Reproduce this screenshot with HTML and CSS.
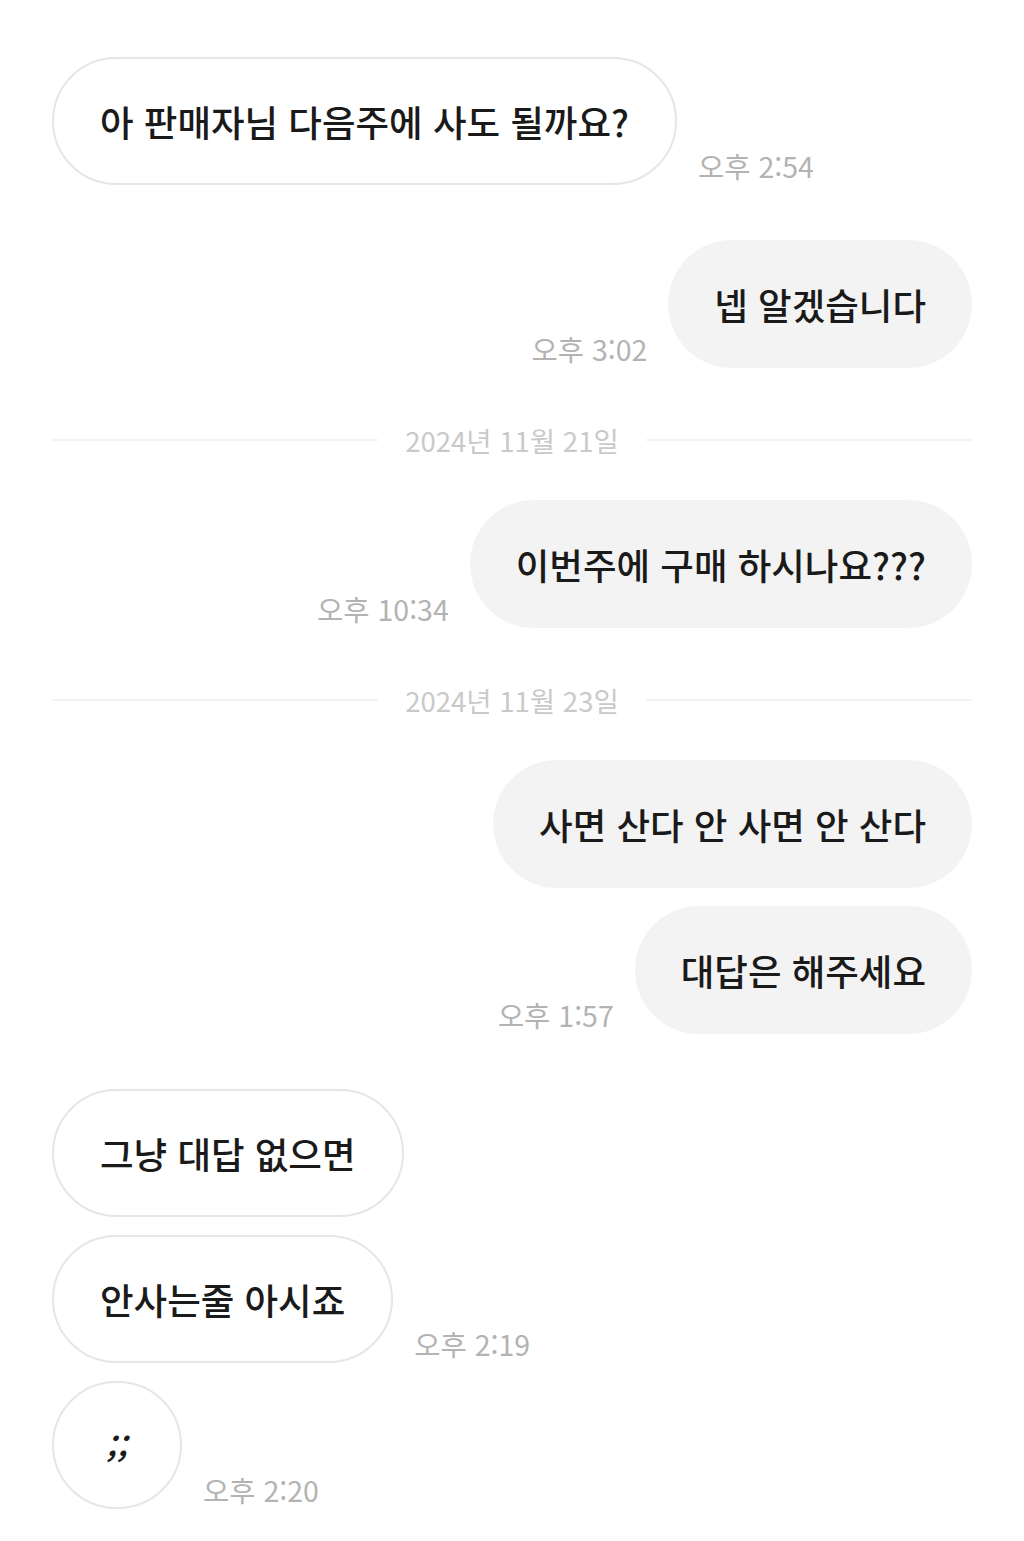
FILE: index.html
```html
<!DOCTYPE html>
<html lang="ko">
<head>
    <meta charset="UTF-8">
    <meta name="viewport" content="width=device-width, initial-scale=1.0">
    <title>채팅</title>
    <link rel="stylesheet" href="styles.css">
</head>
<body>
    <div class="chat">
        <div class="row left">
            <div class="bubble">아 판매자님 다음주에 사도 될까요?</div>
            <span class="time">오후 2:54</span>
        </div>

        <div class="row right group">
            <span class="time">오후 3:02</span>
            <div class="bubble">넵 알겠습니다</div>
        </div>

        <div class="date">2024년 11월 21일</div>

        <div class="row right">
            <span class="time">오후 10:34</span>
            <div class="bubble">이번주에 구매 하시나요???</div>
        </div>

        <div class="date">2024년 11월 23일</div>

        <div class="row right">
            <div class="bubble">사면 산다 안 사면 안 산다</div>
        </div>
        <div class="row right next">
            <span class="time">오후 1:57</span>
            <div class="bubble">대답은 해주세요</div>
        </div>

        <div class="row left group">
            <div class="bubble">그냥 대답 없으면</div>
        </div>
        <div class="row left next">
            <div class="bubble">안사는줄 아시죠</div>
            <span class="time">오후 2:19</span>
        </div>
        <div class="row left next">
            <div class="bubble round">;;</div>
            <span class="time">오후 2:20</span>
        </div>
    </div>
</body>
</html>
```

FILE: styles.css
```css
body {
    margin: 0;
    background: #fff;
    font-family: "Noto Sans CJK KR", "Noto Sans", sans-serif;
    color: #1a1a1a;
}
.chat {
    display: flex;
    flex-direction: column;
    padding: 57px 52px 40px;
}
.row {
    display: flex;
    align-items: flex-end;
    gap: 21px;
}
.row.right {
    justify-content: flex-end;
}
.row.group {
    margin-top: 55px;
}
.row.next {
    margin-top: 18px;
}
.bubble {
    box-sizing: border-box;
    height: 128px;
    display: flex;
    align-items: center;
    justify-content: center;
    padding: 0 46px;
    border-radius: 64px;
    font-size: 36.5px;
    font-weight: 500;
    white-space: nowrap;
}
.left .bubble {
    background: #fff;
    border: 2px solid #e6e6e6;
}
.right .bubble {
    background: #f3f3f3;
}
.bubble.round {
    width: 130px;
    padding: 0;
    font-size: 30px;
    font-weight: 700;
    font-style: italic;
    letter-spacing: 1px;
}
.time {
    font-size: 28.5px;
    color: #b3b3b3;
    line-height: 1;
    padding-bottom: 5px;
}
.date {
    display: flex;
    align-items: center;
    gap: 27px;
    height: 30px;
    margin: 57px 0 45px;
    font-size: 27.5px;
    color: #c9c9c9;
}
.date::before,
.date::after {
    content: "";
    flex: 1;
    height: 2px;
    background: #f3f3f3;
}
```
